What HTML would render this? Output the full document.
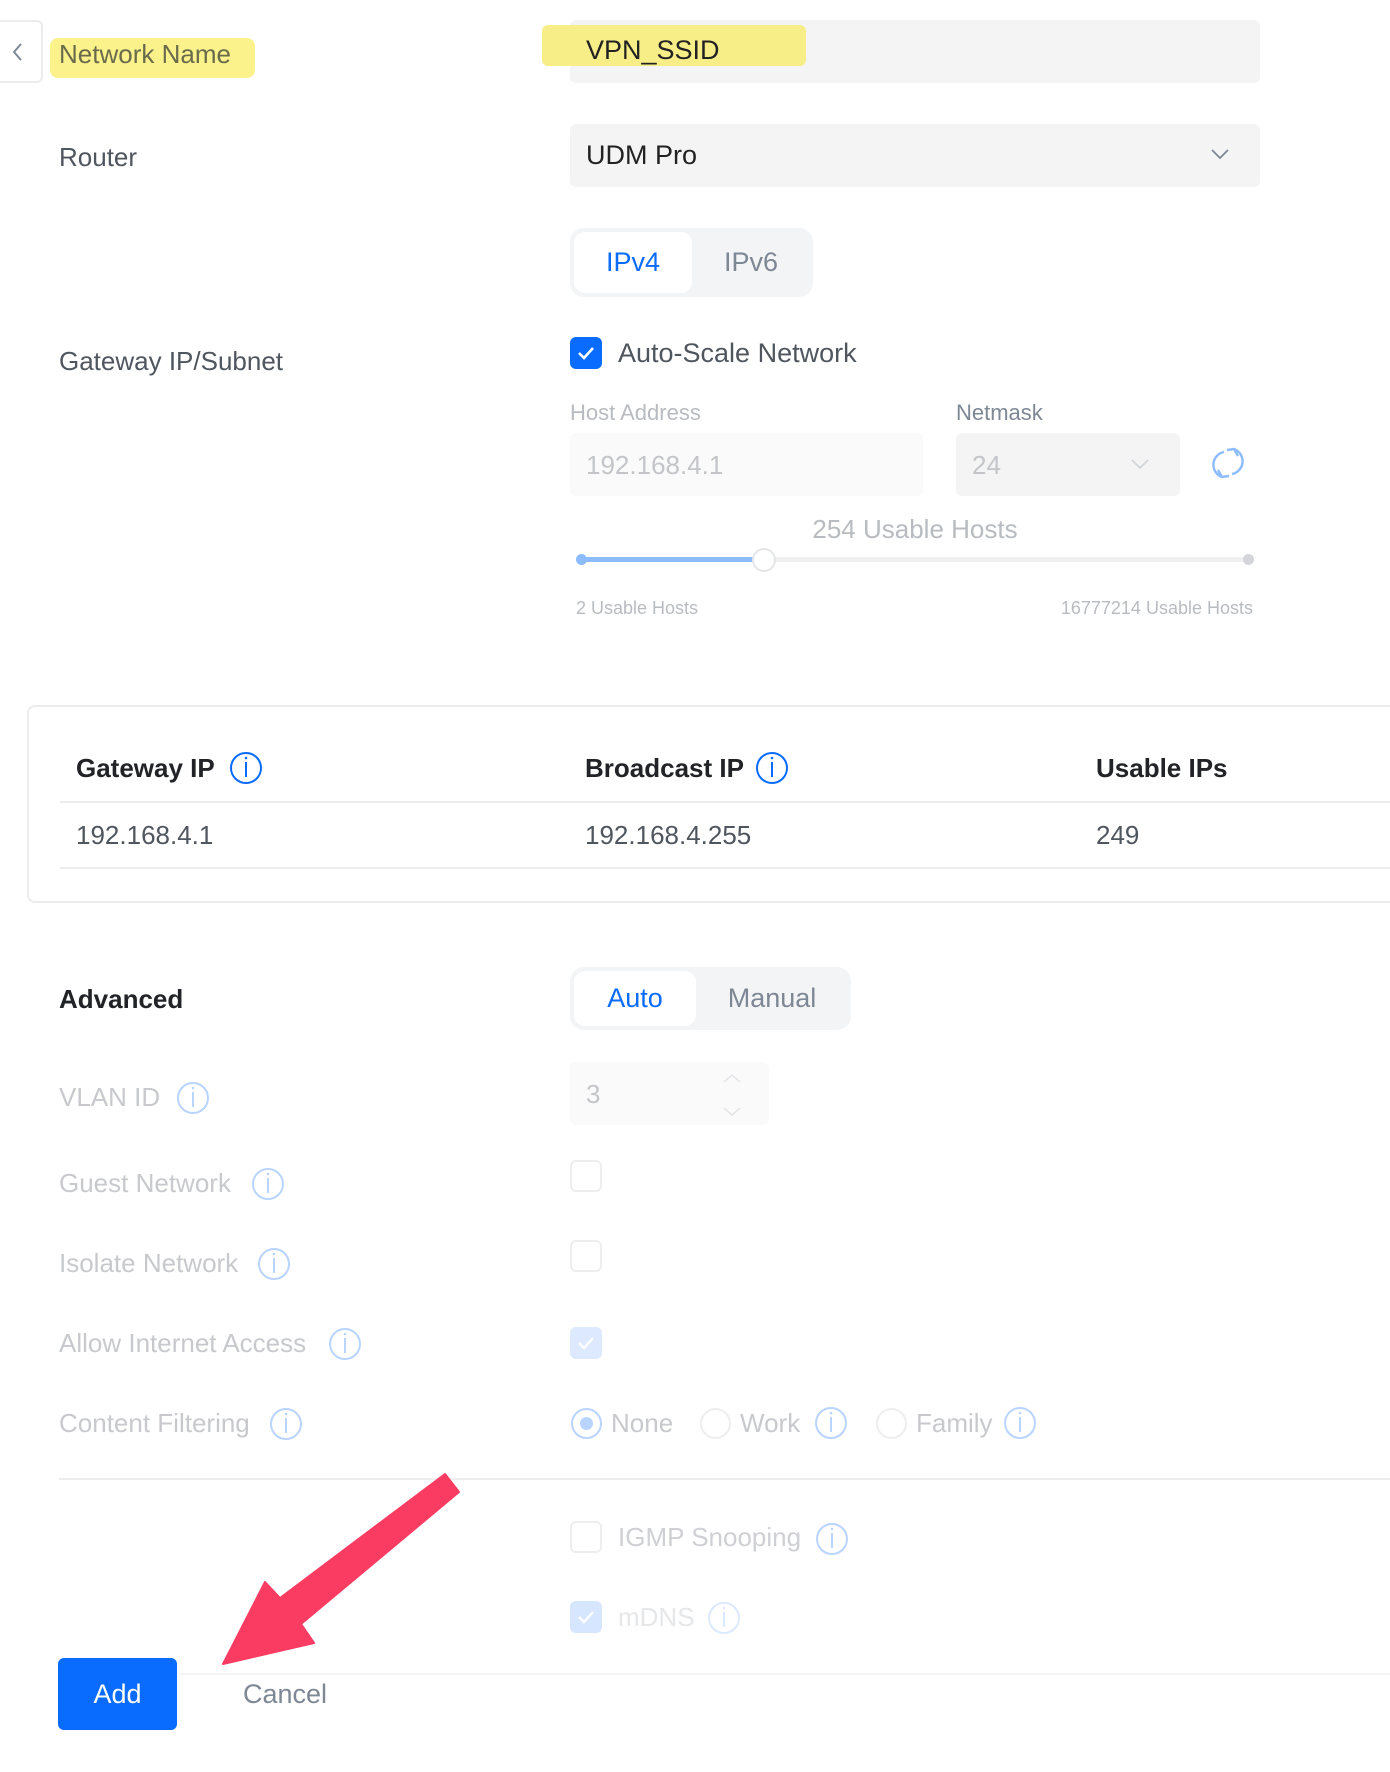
<!DOCTYPE html>
<html><head><meta charset="utf-8"><style>
*{box-sizing:border-box;margin:0;padding:0}
body{width:1390px;height:1772px;background:#fff;position:relative;overflow:hidden;font-family:"Liberation Sans",sans-serif;color:#50565e}
.a{position:absolute;white-space:nowrap}
.lbl{font-size:26px;color:#50565e;line-height:30px}
.dis{color:#c8c9cc}
</style></head><body>

<div class="a" style="left:-8px;top:20px;width:51px;height:63px;border:2px solid #ececee;border-radius:6px"></div>
<svg class="a" style="left:11px;top:42px" width="14" height="20"><path d="M10 2 L3 10 L10 18" fill="none" stroke="#7e8794" stroke-width="2"/></svg>

<div class="a" style="left:50px;top:38px;width:205px;height:40px;background:#fbf28c;border-radius:8px"></div>
<div class="a lbl" style="left:59px;top:39px;color:#6a6b4c">Network Name</div>

<div class="a" style="left:570px;top:20px;width:690px;height:63px;background:#f4f4f5;border-radius:6px"></div>
<div class="a" style="left:542px;top:25px;width:264px;height:41px;background:#f8ee88;border-radius:6px"></div>
<div class="a" style="left:586px;top:35px;font-size:27px;color:#222">VPN_SSID</div>

<div class="a lbl" style="left:59px;top:142px">Router</div>
<div class="a" style="left:570px;top:124px;width:690px;height:63px;background:#f4f4f5;border-radius:6px"></div>
<div class="a" style="left:586px;top:140px;font-size:27px;color:#222">UDM Pro</div>
<svg class="a" style="left:1210px;top:147px" width="20" height="14"><path d="M2 3 L10 11 L18 3" fill="none" stroke="#7e8794" stroke-width="1.8"/></svg>

<div class="a" style="left:570px;top:228px;width:243px;height:69px;background:#f3f4f6;border-radius:14px"></div>
<div class="a" style="left:574px;top:232px;width:118px;height:61px;background:#fff;border-radius:11px"></div>
<div class="a" style="left:574px;top:247px;width:118px;text-align:center;font-size:27px;color:#0a6cff">IPv4</div>
<div class="a" style="left:692px;top:247px;width:118px;text-align:center;font-size:27px;color:#7e8794">IPv6</div>

<div class="a lbl" style="left:59px;top:346px">Gateway IP/Subnet</div>
<div class="a" style="left:570px;top:337px;width:32px;height:32px;background:#0a6cff;border-radius:6px"></div>
<svg class="a" style="left:570px;top:337px" width="32" height="32"><path d="M9 16 L14 21 L23 11" fill="none" stroke="#fff" stroke-width="2.6"/></svg>
<div class="a" style="left:618px;top:338px;font-size:27px;color:#50565e">Auto-Scale Network</div>

<div class="a" style="left:570px;top:400px;font-size:22px;color:#b8bbc0">Host Address</div>
<div class="a" style="left:956px;top:400px;font-size:22px;color:#7e8794">Netmask</div>
<div class="a" style="left:570px;top:433px;width:353px;height:63px;background:#fafafa;border-radius:6px"></div>
<div class="a" style="left:586px;top:450px;font-size:26px;color:#c3c5c9">192.168.4.1</div>
<div class="a" style="left:956px;top:433px;width:224px;height:63px;background:#f4f4f5;border-radius:6px"></div>
<div class="a" style="left:972px;top:450px;font-size:26px;color:#c3c5c9">24</div>
<svg class="a" style="left:1130px;top:457px" width="20" height="14"><path d="M2 3 L10 11 L18 3" fill="none" stroke="#d0d3d7" stroke-width="1.6"/></svg>
<svg class="a" style="left:1210px;top:443px" width="36" height="40"><path d="M12 34 A13 13 0 0 1 14 9 M24 6 A13 13 0 0 1 22 31" fill="none" stroke="#8cbcff" stroke-width="2.4"/><path d="M8 27 L12 34 L19 33 M28 13 L24 6 L17 7" fill="none" stroke="#8cbcff" stroke-width="2.4"/></svg>

<div class="a" style="left:570px;top:514px;width:690px;text-align:center;font-size:26px;color:#b8bbc0">254 Usable Hosts</div>
<div class="a" style="left:581px;top:557px;width:668px;height:5px;background:#f0f0f1;border-radius:3px"></div>
<div class="a" style="left:581px;top:557px;width:183px;height:5px;background:#8cbcff;border-radius:3px"></div>
<div class="a" style="left:576px;top:554px;width:11px;height:11px;background:#8cbcff;border-radius:50%"></div>
<div class="a" style="left:1243px;top:554px;width:11px;height:11px;background:#d4d5d8;border-radius:50%"></div>
<div class="a" style="left:752px;top:548px;width:24px;height:24px;background:#fff;border:2px solid #e4e5e7;border-radius:50%"></div>
<div class="a" style="left:576px;top:598px;font-size:18px;color:#b8bbc0">2 Usable Hosts</div>
<div class="a" style="left:1000px;top:598px;width:253px;text-align:right;font-size:18px;color:#b8bbc0">16777214 Usable Hosts</div>

<div class="a" style="left:27px;top:705px;width:1400px;height:198px;border:2px solid #ececee;border-radius:8px"></div>
<div class="a" style="left:60px;top:801px;width:1340px;height:2px;background:#ececee"></div>
<div class="a" style="left:60px;top:867px;width:1340px;height:2px;background:#ececee"></div>
<div class="a" style="left:76px;top:753px;font-size:26px;font-weight:bold;color:#212327">Gateway IP</div>
<div class="a" style="left:585px;top:753px;font-size:26px;font-weight:bold;color:#212327">Broadcast IP</div>
<div class="a" style="left:1096px;top:753px;font-size:26px;font-weight:bold;color:#212327">Usable IPs</div>
<div class="a" style="left:76px;top:820px;font-size:26px;color:#50565e">192.168.4.1</div>
<div class="a" style="left:585px;top:820px;font-size:26px;color:#50565e">192.168.4.255</div>
<div class="a" style="left:1096px;top:820px;font-size:26px;color:#50565e">249</div>

<div class="a" style="left:59px;top:984px;font-size:26px;font-weight:bold;color:#212327">Advanced</div>
<div class="a" style="left:570px;top:967px;width:281px;height:63px;background:#f3f4f6;border-radius:14px"></div>
<div class="a" style="left:574px;top:971px;width:122px;height:55px;background:#fff;border-radius:11px"></div>
<div class="a" style="left:574px;top:983px;width:122px;text-align:center;font-size:27px;color:#0a6cff">Auto</div>
<div class="a" style="left:696px;top:983px;width:152px;text-align:center;font-size:27px;color:#7e8794">Manual</div>

<div class="a lbl dis" style="left:59px;top:1082px">VLAN ID</div>
<div class="a" style="left:570px;top:1062px;width:199px;height:63px;background:#fafafa;border-radius:6px"></div>
<div class="a" style="left:586px;top:1079px;font-size:26px;color:#c3c5c9">3</div>
<svg class="a" style="left:722px;top:1072px" width="20" height="46"><path d="M2 10 L10 3 L18 10 M2 36 L10 43 L18 36" fill="none" stroke="#e0e2e5" stroke-width="1.4"/></svg>

<div class="a lbl dis" style="left:59px;top:1168px">Guest Network</div>
<div class="a" style="left:570px;top:1160px;width:32px;height:32px;border:2px solid #eeeef0;border-radius:6px"></div>
<div class="a lbl dis" style="left:59px;top:1248px">Isolate Network</div>
<div class="a" style="left:570px;top:1240px;width:32px;height:32px;border:2px solid #eeeef0;border-radius:6px"></div>
<div class="a lbl dis" style="left:59px;top:1328px">Allow Internet Access</div>
<div class="a" style="left:570px;top:1327px;width:32px;height:32px;background:#dce9ff;border-radius:6px"></div>
<svg class="a" style="left:570px;top:1327px" width="32" height="32"><path d="M9 16 L14 21 L23 11" fill="none" stroke="#fff" stroke-width="2.4"/></svg>
<div class="a lbl dis" style="left:59px;top:1408px">Content Filtering</div>

<div class="a" style="left:571px;top:1408px;width:31px;height:31px;border:2px solid #b8d4ff;border-radius:50%"></div>
<div class="a" style="left:580px;top:1417px;width:13px;height:13px;background:#b8d4ff;border-radius:50%"></div>
<div class="a lbl dis" style="left:611px;top:1408px">None</div>
<div class="a" style="left:700px;top:1408px;width:31px;height:31px;border:2px solid #eeeef0;border-radius:50%"></div>
<div class="a lbl dis" style="left:740px;top:1408px">Work</div>
<div class="a" style="left:876px;top:1408px;width:31px;height:31px;border:2px solid #eeeef0;border-radius:50%"></div>
<div class="a lbl dis" style="left:916px;top:1408px">Family</div>

<div class="a" style="left:59px;top:1478px;width:1340px;height:2px;background:#eeeef0"></div>

<div class="a" style="left:570px;top:1521px;width:32px;height:32px;border:2px solid #eeeef0;border-radius:6px"></div>
<div class="a lbl" style="left:618px;top:1522px;color:#cfd0d3">IGMP Snooping</div>
<div class="a" style="left:570px;top:1601px;width:32px;height:32px;background:#d6e6ff;border-radius:6px"></div>
<svg class="a" style="left:570px;top:1601px" width="32" height="32"><path d="M9 16 L14 21 L23 11" fill="none" stroke="#fff" stroke-width="2.4"/></svg>
<div class="a lbl" style="left:618px;top:1602px;color:#e6e7e9">mDNS</div>

<svg class="a" style="left:0;top:0" width="1390" height="1772">
<defs><g id="i"><circle cx="0" cy="0" r="15" fill="none" stroke-width="2"/><line x1="0" y1="-6" x2="0" y2="9" stroke-width="2"/><circle cx="0" cy="-10" r="1.3" stroke="none"/></g></defs>
<g stroke="#0a6cff" fill="#0a6cff"><use href="#i" x="246" y="768"/><use href="#i" x="772" y="768"/></g>
<g stroke="#b8d4ff" fill="#b8d4ff">
<use href="#i" x="193" y="1098"/><use href="#i" x="268" y="1184"/><use href="#i" x="274" y="1264"/><use href="#i" x="345" y="1344"/><use href="#i" x="286" y="1424"/>
<use href="#i" x="831" y="1423"/><use href="#i" x="1020" y="1423"/><use href="#i" x="832" y="1539"/></g>
<g stroke="#dce9ff" fill="#dce9ff"><use href="#i" x="724" y="1618"/></g>
<line x1="180" y1="1674" x2="1390" y2="1674" stroke="#f4f4f5" stroke-width="2"/>
<polygon points="223,1664 265,1582 280,1598 445,1474 459,1492 301,1624 314,1643" fill="#fa3c62" stroke="#fa3c62" stroke-width="2" stroke-linejoin="round"/>
</svg>

<div class="a" style="left:58px;top:1658px;width:119px;height:72px;background:#0a6cff;border-radius:6px;color:#fff;font-size:27px;text-align:center;line-height:72px">Add</div>
<div class="a" style="left:243px;top:1679px;font-size:27px;color:#7e8794">Cancel</div>

</body></html>
